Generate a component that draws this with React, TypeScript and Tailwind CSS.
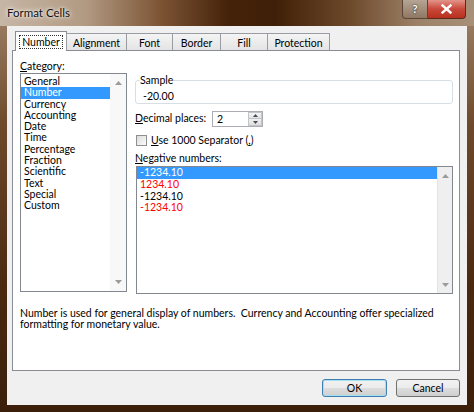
import React from 'react';

function Tri({ up }: { up?: boolean }) {
  return (
    <svg width="7" height="4" viewBox="0 0 7 4" className="block">
      <path d={up ? 'M0 4L3.5 0L7 4Z' : 'M0 0L3.5 4L7 0Z'} fill="#9b9b9b" />
    </svg>
  );
}

function U({ children }: { children: React.ReactNode }) {
  return <span className="underline underline-offset-[1px]">{children}</span>;
}

const tabs = [
  { label: 'Alignment', w: 'w-[61px]' },
  { label: 'Font', w: 'w-[47px]' },
  { label: 'Border', w: 'w-[49px]' },
  { label: 'Fill', w: 'w-[48px]' },
  { label: 'Protection', w: 'w-[63px]' },
];

const categories = [
  'General', 'Number', 'Currency', 'Accounting', 'Date', 'Time',
  'Percentage', 'Fraction', 'Scientific', 'Text', 'Special', 'Custom',
];

const negatives = [
  { t: '-1234.10', c: 'bg-[#3399ff] text-white' },
  { t: '1234.10', c: 'text-[#f00]' },
  { t: '-1234.10', c: 'text-black' },
  { t: '-1234.10', c: 'text-[#f00]' },
];

function TitleBar() {
  return (
    <div className="h-[26px] flex justify-between bg-[linear-gradient(90deg,#c6b6a5_0%,#b29a82_18%,#7c5434_34%,#45230a_48%,#3f1f07_58%,#6e4a2c_74%,#9c8168_88%,#a89078_100%)]">
      <div className="pl-[7px] pt-[6px] leading-[14px] text-[11.5px] text-[#111] [text-shadow:0_0_6px_#fff,0_0_3px_#fff]">
        Format Cells
      </div>
      <div className="flex items-start pr-[8px]">
        <div className="w-[26px] h-[19px] rounded-bl-[4px] border border-t-0 border-[#5b4636] bg-[linear-gradient(#b5a594,#8f7863)] flex items-center justify-center text-white font-bold text-[11px] [text-shadow:0_0_2px_#000]">
          ?
        </div>
        <div className="w-[38px] h-[19px] rounded-br-[4px] border border-l-0 border-t-0 border-[#5b2a1c] bg-[linear-gradient(#e3948a,#c9483a_50%,#b8311f)] flex items-center justify-center">
          <svg width="11" height="10" viewBox="0 0 11 10">
            <path d="M1.5 1.5L9.5 8.5M9.5 1.5L1.5 8.5" stroke="#fff" strokeWidth="2.4" strokeLinecap="square" />
          </svg>
        </div>
      </div>
    </div>
  );
}

export default function App() {
  return (
    <div className="w-[474px] h-[412px] flex flex-col overflow-hidden font-['Lato',sans-serif] text-[10.5px] text-black bg-[linear-gradient(180deg,#a2866c_0%,#6e4a2c_30%,#4a2810_70%,#3c1f0a_100%)]">
      <TitleBar />
      <div className="flex-1 px-[7px] pb-[7px] flex">
        <div className="flex-1 bg-[#f0f0f0] flex flex-col pt-[5px]">
          {/* tabs */}
          <div className="flex items-end h-[19px] pl-[8px] relative z-10">
            <div className="w-[52px] h-[20px] -mb-px bg-white border border-b-0 border-[#898c95] flex items-center justify-center pt-[1px]">
              <span className="outline outline-1 outline-dotted outline-[#333] px-[2px] leading-[12px]">Number</span>
            </div>
            {tabs.map((t) => (
              <div
                key={t.label}
                className={`${t.w} -ml-px h-[17px] border border-b-0 border-[#9a9ca3] bg-[linear-gradient(#f4f4f4,#e4e4e4)] flex items-center justify-center leading-[12px] pt-[1px]`}
              >
                {t.label}
              </div>
            ))}
          </div>

          {/* panel */}
          <div className="ml-[5px] mr-[7px] h-[321px] bg-white border border-[#898c95] flex flex-col">
            <div className="flex">
              <div className="pl-[7px] pt-[8px] flex flex-col">
                <div className="leading-[14px]"><U>C</U>ategory:</div>
                <div className="w-[107px] h-[219px] border border-[#828790] bg-white flex">
                  <div className="w-[89px] pt-[2px]">
                    {categories.map((c) => (
                      <div
                        key={c}
                        className={`h-[11.3px] leading-[11.3px] pl-[3px] ${c === 'Number' ? 'bg-[#3399ff] text-white' : ''}`}
                      >
                        {c}
                      </div>
                    ))}
                  </div>
                  <div className="flex-1 bg-[#f8f8f8] flex flex-col items-center justify-between py-[7px]">
                    <Tri up />
                    <Tri />
                  </div>
                </div>
              </div>

              <div className="ml-[8px] pt-[22px] w-[318px] flex flex-col">
                <fieldset className="border border-[#d5dfe5] rounded-[3px] pl-[4px]">
                  <legend className="leading-[14px]">Sample</legend>
                  <div className="pl-[3px] pt-[2px] leading-[14px]">-20.00</div>
                </fieldset>

                <div className="mt-[7px] h-[16px] flex items-center">
                  <div className="w-[77px]"><U>D</U>ecimal places:</div>
                  <div className="w-[51px] h-[16px] border border-[#abadb3] bg-white flex">
                    <div className="flex-1 pl-[4px] leading-[14px]">2</div>
                    <div className="w-[14px] flex flex-col">
                      <div className="h-[7px] border border-[#c2c5ca] bg-[linear-gradient(#f6f6f6,#e2e2e2)] flex items-center justify-center">
                        <svg width="5" height="3" viewBox="0 0 5 3"><path d="M0 3L2.5 0L5 3Z" fill="#4b4b4b" /></svg>
                      </div>
                      <div className="h-[7px] border border-t-0 border-[#c2c5ca] bg-[linear-gradient(#f0f0f0,#dedede)] flex items-center justify-center">
                        <svg width="5" height="3" viewBox="0 0 5 3"><path d="M0 0L2.5 3L5 0Z" fill="#4b4b4b" /></svg>
                      </div>
                    </div>
                  </div>
                </div>

                <div className="mt-[6px] h-[14px] flex items-center">
                  <div className="ml-[1px] w-[11px] h-[11px] border border-[#8e8f8f] bg-[linear-gradient(135deg,#dcdcdc,#fbfbfb)]" />
                  <div className="ml-[4px] leading-[14px]"><U>U</U>se 1000 Separator (<U>,</U>)</div>
                </div>

                <div className="mt-[4px] leading-[14px]"><U>N</U>egative numbers:</div>
                <div className="mt-[1px] ml-[1px] w-[317px] h-[128px] border border-[#828790] bg-white flex">
                  <div className="w-[300px]">
                    {negatives.map((n, i) => (
                      <div key={i} className={`h-[11.5px] leading-[11.5px] pl-[3px] ${n.c} ${i === 0 ? 'h-[12px]' : ''}`}>
                        {n.t}
                      </div>
                    ))}
                  </div>
                  <div className="flex-1 bg-[#efefef] border-l border-[#e4e4e4] flex flex-col items-center justify-between pt-[7px] pb-[6px]">
                    <Tri up />
                    <Tri />
                  </div>
                </div>
              </div>
            </div>

            <div className="mt-[14px] pl-[7px] leading-[11px] whitespace-pre">
              {'Number is used for general display of numbers.  Currency and Accounting offer specialized\nformatting for monetary value.'}
            </div>
          </div>

          {/* buttons */}
          <div className="mt-[8px] pr-[7px] flex justify-end gap-[9px]">
            <div className="w-[65px] h-[18px] rounded-[3px] border border-[#3c7fb1] bg-[linear-gradient(#f2f2f2_0%,#ebebeb_50%,#dddddd_51%,#cfcfcf_100%)] shadow-[inset_0_0_0_1px_#a8def5] flex items-center justify-center leading-[12px]">
              OK
            </div>
            <div className="w-[64px] h-[18px] rounded-[3px] border border-[#707070] bg-[linear-gradient(#f2f2f2_0%,#ebebeb_50%,#dddddd_51%,#cfcfcf_100%)] flex items-center justify-center leading-[12px]">
              Cancel
            </div>
          </div>
        </div>
      </div>
    </div>
  );
}
